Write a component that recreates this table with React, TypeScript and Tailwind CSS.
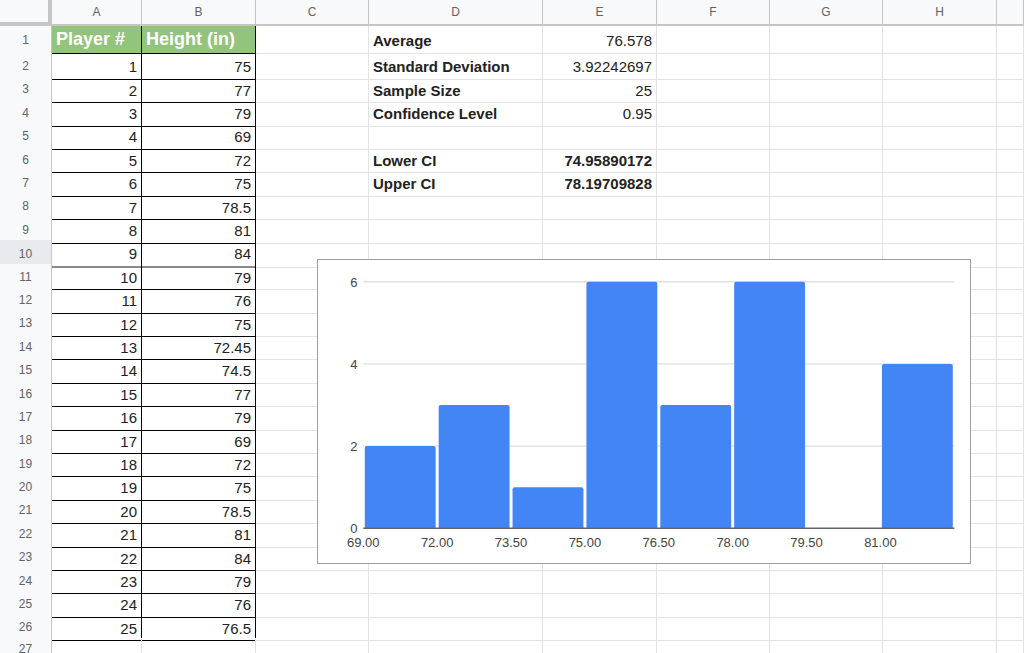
const heights = [75, 77, 79, 69, 72, 75, 78.5, 81, 84, 79, 76, 75, 72.45, 74.5, 77, 79, 69, 72, 75, 78.5, 81, 84, 79, 76, 76.5];

const stats: Record<number, { label: string; value: string; bold?: boolean }> = {
  1: { label: "Average", value: "76.578" },
  2: { label: "Standard Deviation", value: "3.92242697" },
  3: { label: "Sample Size", value: "25" },
  4: { label: "Confidence Level", value: "0.95" },
  6: { label: "Lower CI", value: "74.95890172", bold: true },
  7: { label: "Upper CI", value: "78.19709828", bold: true },
};

const cols = "grid grid-cols-[52px_90px_114px_113px_174px_114px_113px_113px_114px_1fr]";
const line = "border-r border-b border-[#e2e3e3]";
const boxed = "border-r border-b border-black";

function HeaderRow() {
  const letters = ["A", "B", "C", "D", "E", "F", "G", "H", ""];
  return (
    <div className={`${cols} h-[26px] bg-[#f8f9fa] text-[12px] text-[#5f6368]`}>
      <div className="border-r-4 border-b-4 border-[#c4c7c5]" />
      {letters.map((l, i) => (
        <div key={i} className="flex items-center justify-center border-r border-b-2 border-[#c4c7c5]">
          {l}
        </div>
      ))}
    </div>
  );
}

function Row({ n }: { n: number }) {
  const stat = stats[n];
  const first = n === 1;
  const inTable = n <= 26;
  const h = first ? "h-[27.3px]" : "h-[23.4px]";
  const cell = "flex items-center px-[4px] pt-[3px]";
  const tableBorder = n === 10 ? "border-r border-black border-b-2 border-b-[#8a8a8a]" : boxed;

  return (
    <div className={`${cols} ${h} text-[15px] text-[#222]`}>
      <div
        className={`flex items-center justify-center border-r border-b border-r-[#c4c7c5] border-b-[#e2e3e3] text-[12px] text-[#5f6368] ${
          n === 10 ? "bg-[#e8eaed]" : "bg-[#f8f9fa]"
        }`}
      >
        {n}
      </div>
      {first ? (
        <>
          <div className={`flex items-center px-[4px] bg-[#93c47d] text-white font-bold text-[18px] ${boxed}`}>Player #</div>
          <div className={`flex items-center px-[4px] bg-[#93c47d] text-white font-bold text-[18px] ${boxed}`}>Height (in)</div>
        </>
      ) : inTable ? (
        <>
          <div className={`${cell} justify-end ${tableBorder}`}>{n - 1}</div>
          <div className={`${cell} justify-end ${tableBorder}`}>{heights[n - 2]}</div>
        </>
      ) : (
        <>
          <div className={line} />
          <div className={line} />
        </>
      )}
      <div className={line} />
      <div className={`${cell} font-bold ${line}`}>{stat?.label}</div>
      <div className={`${cell} justify-end ${stat?.bold ? "font-bold" : ""} ${line}`}>{stat?.value}</div>
      <div className={line} />
      <div className={line} />
      <div className={line} />
      <div className={line} />
    </div>
  );
}

function Histogram() {
  const counts = [2, 3, 1, 6, 3, 6, 0, 4];
  const ticks = ["69.00", "72.00", "73.50", "75.00", "76.50", "78.00", "79.50", "81.00"];
  const x0 = 45.3;
  const pw = 591;
  const bw = pw / 8;
  const base = 268.3;
  const unit = 41.1;

  return (
    <div className="absolute left-[317px] top-[259px] w-[654px] h-[305px] border border-[#9e9e9e] bg-white">
      <svg width="652" height="303" className="block">
        {[2, 4, 6].map((v) => (
          <line key={v} x1={x0} x2={x0 + pw} y1={base - v * unit} y2={base - v * unit} stroke="#e0e0e0" strokeWidth="1.4" />
        ))}
        {counts.map((c, i) => {
          if (!c) return null;
          const x = x0 + i * bw + 1.5;
          const w = bw - 3;
          const y = base - c * unit;
          const r = 2;
          return (
            <path
              key={i}
              d={`M${x} ${base} V${y + r} Q${x} ${y} ${x + r} ${y} H${x + w - r} Q${x + w} ${y} ${x + w} ${y + r} V${base} Z`}
              fill="#4285f4"
            />
          );
        })}
        <line x1={x0} x2={x0 + pw} y1={base} y2={base} stroke="#666" strokeWidth="1.6" />
        {[0, 2, 4, 6].map((v) => (
          <text key={v} x="39.5" y={base - v * unit + 5} textAnchor="end" fontSize="13" fill="#444">
            {v}
          </text>
        ))}
        {ticks.map((t, i) => (
          <text key={t} x={x0 + i * bw} y="287" textAnchor="middle" fontSize="13" fill="#444">
            {t}
          </text>
        ))}
      </svg>
    </div>
  );
}

export default function App() {
  const rows = Array.from({ length: 27 }, (_, i) => i + 1);
  return (
    <div className="relative w-[1024px] h-[653px] overflow-hidden bg-white font-['Liberation_Sans',Arial,sans-serif]">
      <HeaderRow />
      {rows.map((n) => (
        <Row key={n} n={n} />
      ))}
      <Histogram />
    </div>
  );
}
